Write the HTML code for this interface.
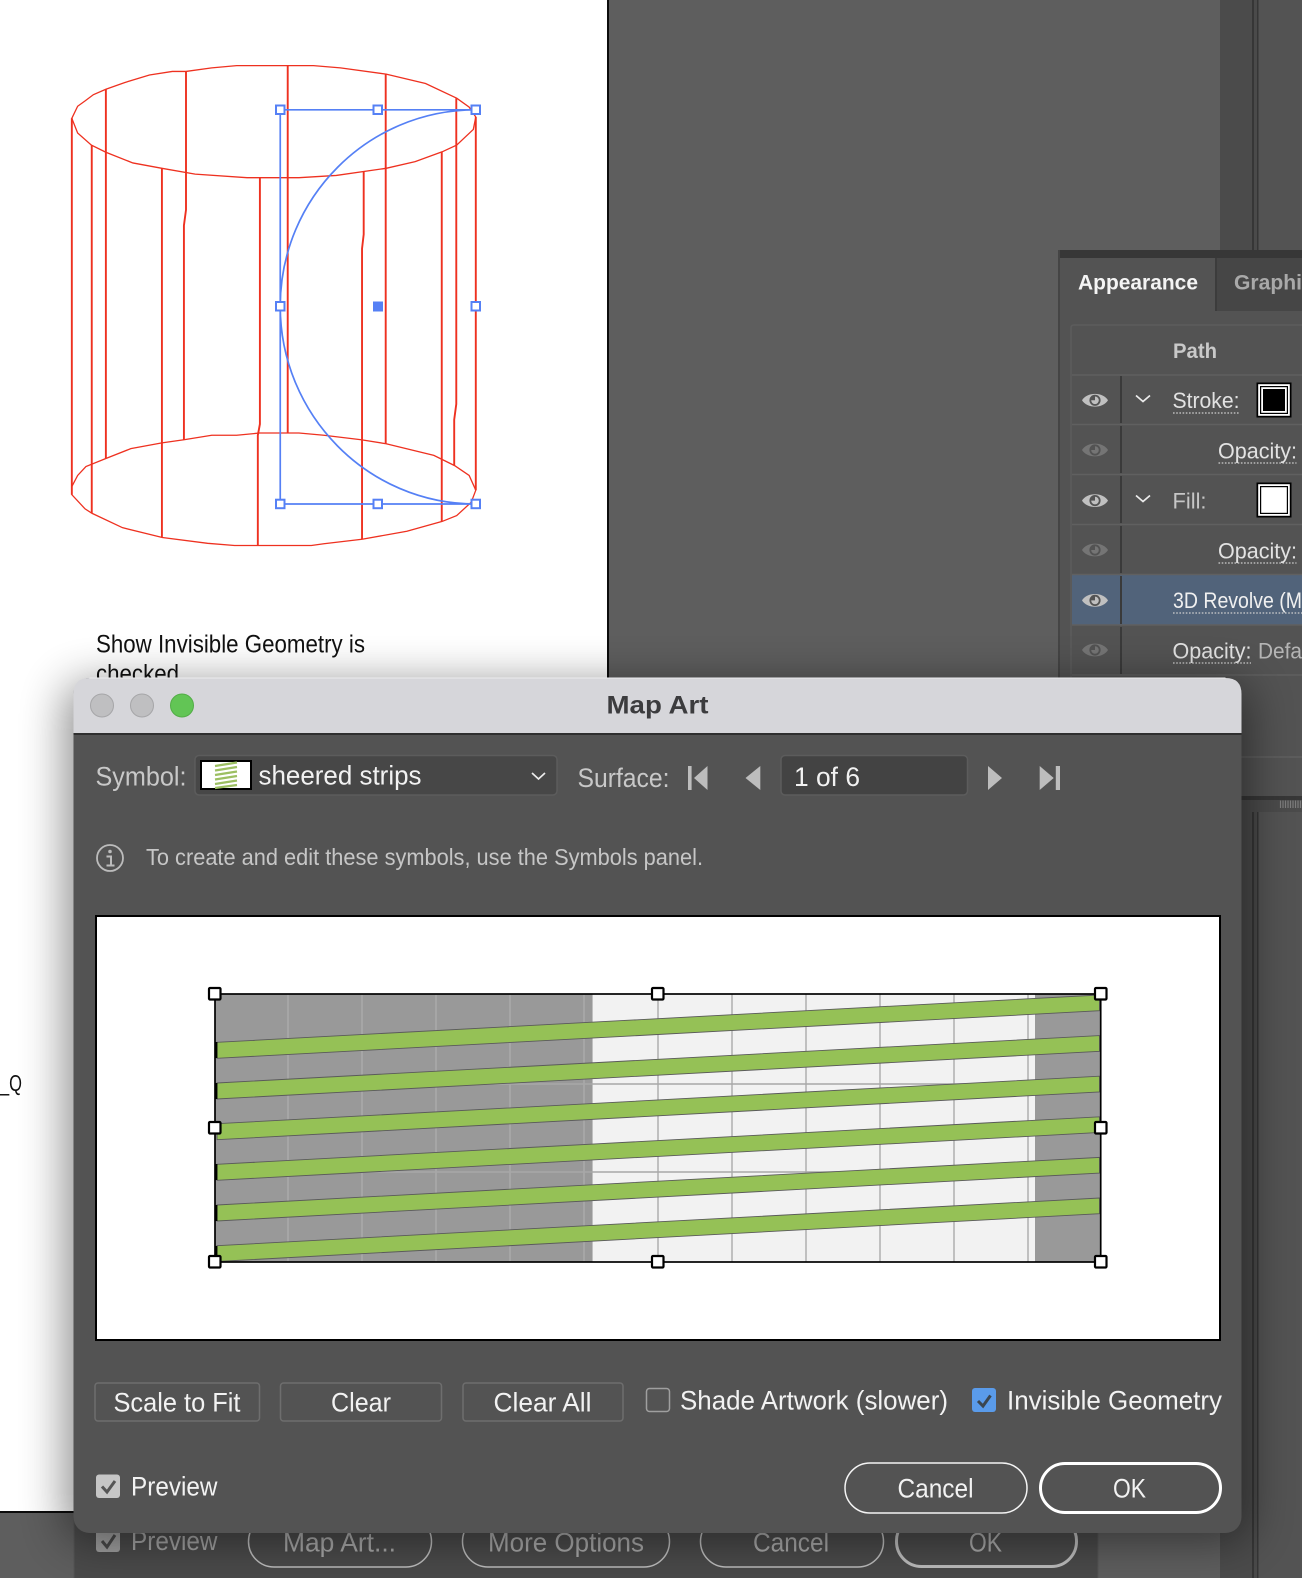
<!DOCTYPE html>
<html><head><meta charset="utf-8"><title>Map Art</title>
<style>
html,body{margin:0;padding:0;background:#5e5e5e;width:1302px;height:1578px;overflow:hidden}
svg{display:block}
text{font-family:"Liberation Sans",sans-serif}
.r{fill:none;stroke:#ee3120;stroke-width:1.9;vector-effect:non-scaling-stroke}
.e{fill:none;stroke:#ee3120;stroke-width:1.3;vector-effect:non-scaling-stroke}
.h{fill:#fff;stroke:#5580f5;stroke-width:2}
.k{fill:#fff;stroke:#000;stroke-width:2.2}
.d{stroke:#cfcfcf;stroke-width:1.3;stroke-dasharray:1.6 1.6}
.rl{stroke:#606060;stroke-width:1.5}
.sp{fill:#95c156;stroke:#5a5a5a;stroke-width:.9}
.gd{stroke:#a9a9a9;stroke-width:1.6}
.gl{stroke:#aaaaaa;stroke-width:1.4}
</style></head><body>
<svg width="1302" height="1578" viewBox="0 0 1302 1578" xmlns="http://www.w3.org/2000/svg">
<defs>
<filter id="sh" x="-10%" y="-15%" width="120%" height="130%"><feGaussianBlur stdDeviation="23"/></filter>
<g id="eye"><path d="M-13,0C-8,-8.5 8,-8.5 13,0C8,8.5 -8,8.5 -13,0Z"/><circle r="5.6" fill="#535353"/><path d="M-3.8,0A3.8,3.8 0 1 0 0,-3.8L0,0Z"/></g>
</defs>

<rect width="1302" height="1578" fill="#5e5e5e"/>
<!-- artboard -->
<rect x="0" y="0" width="608" height="1511" fill="#fff"/>
<rect x="607" y="0" width="2" height="1513" fill="#0c0c0c"/>
<rect x="0" y="1511" width="609" height="2" fill="#0c0c0c"/>

<svg x="0" y="0" width="651" height="700" viewBox="0 0 1568 1568" preserveAspectRatio="none">
<path class="e" d="M173,265L187,238L205,226L225,212L255,200L300,185L360,168L415,160L448,160L510,152L570,147L755,147L820,152L930,166L1025,187L1100,220L1130,240L1146,262L1140,290L1100,325L1065,340L1000,362L930,377L810,393L720,398L595,398L470,390L390,377L320,365L255,341L220,325L187,298Z"/>
<path class="e" d="M173,1090L187,1065L207,1045L255,1027L315,1005L390,992L443,985L510,975L570,975L625,970L720,970L780,975L870,985L930,994L1045,1020L1095,1043L1130,1065L1146,1098L1135,1125L1100,1155L1065,1168L980,1190L872,1208L780,1218L750,1222L565,1222L500,1217L391,1204L295,1182L222,1150L205,1140L173,1108Z"/>
<path class="r" d="M173,265V1108M221,325V1150M255,200V1027M390,377V1204M448,160V470L443,505V985M626,398V950L621,975V1222M693,147V970M876,385V525L872,557V1208M929,165V994M1064,340V1168M1099,220V905L1094,940V1043M1146,262V1098"/>
<path d="M1146,246H675V1129H1146M1146,246C886,246 675,443 675,686C675,930 886,1129 1146,1129" fill="none" stroke="#5580f5" stroke-width="1.7" vector-effect="non-scaling-stroke"/>
</svg>
<rect class="h" x="276" y="105.5" width="8.5" height="8.5"/>
<rect class="h" x="373.5" y="105.5" width="8.5" height="8.5"/>
<rect class="h" x="471.5" y="105.5" width="8.5" height="8.5"/>
<rect class="h" x="276" y="302" width="8.5" height="8.5"/>
<rect x="373" y="301.5" width="10" height="10" fill="#5580f5"/>
<rect class="h" x="471.5" y="302" width="8.5" height="8.5"/>
<rect class="h" x="276" y="499.7" width="8.5" height="8.5"/>
<rect class="h" x="373.5" y="499.7" width="8.5" height="8.5"/>
<rect class="h" x="471.5" y="499.7" width="8.5" height="8.5"/>

<text x="96" y="652.5" font-size="25" fill="#111" textLength="269" lengthAdjust="spacingAndGlyphs">Show Invisible Geometry is</text>
<text x="96" y="682" font-size="25" fill="#111" textLength="83" lengthAdjust="spacingAndGlyphs">checked</text>
<text x="0" y="1091" font-size="23" fill="#111" textLength="22" lengthAdjust="spacingAndGlyphs">_Q</text>

<!-- right side vertical bands -->
<rect x="1220" y="0" width="32" height="1578" fill="#4b4b4b"/>
<rect x="1252" y="0" width="2" height="1578" fill="#363636"/>
<rect x="1254" y="0" width="3" height="1578" fill="#4a4a4a"/>
<rect x="1257" y="0" width="1.5" height="1578" fill="#363636"/>
<rect x="1258.5" y="0" width="44" height="1578" fill="#535353"/>

<!-- Appearance panel -->
<rect x="1058" y="250" width="244" height="562" fill="#535353"/>
<rect x="1058" y="250" width="244" height="8" fill="#373737"/>
<rect x="1058" y="250" width="2" height="562" fill="#454545"/>
<rect x="1216" y="258" width="86" height="53" fill="#464646"/>
<rect x="1215" y="258" width="2" height="53" fill="#3c3c3c"/>
<text x="1078" y="289.5" font-size="21.5" font-weight="700" fill="#f4f4f4" textLength="120" lengthAdjust="spacingAndGlyphs">Appearance</text>
<text x="1234" y="289.5" font-size="21.5" font-weight="700" fill="#a9a9a9" textLength="68" lengthAdjust="spacingAndGlyphs">Graphi</text>

<path d="M1071,757V328Q1071,325 1074,325H1302" fill="none" stroke="#5c5c5c" stroke-width="1.5"/>
<rect x="1072" y="575" width="230" height="50" fill="#51637a"/>
<line class="rl" x1="1072" y1="375" x2="1302" y2="375"/>
<line class="rl" x1="1072" y1="424.5" x2="1302" y2="424.5"/>
<line class="rl" x1="1072" y1="474.5" x2="1302" y2="474.5"/>
<line class="rl" x1="1072" y1="524.5" x2="1302" y2="524.5"/>
<line class="rl" x1="1072" y1="574.5" x2="1302" y2="574.5"/>
<line class="rl" x1="1072" y1="625" x2="1302" y2="625"/>
<line class="rl" x1="1072" y1="675" x2="1302" y2="675"/>
<line class="rl" x1="1072" y1="757" x2="1302" y2="757"/>
<g fill="#3a3a3a">
<rect x="1120" y="376" width="2" height="47"/><rect x="1120" y="426" width="2" height="47"/>
<rect x="1120" y="476" width="2" height="47"/><rect x="1120" y="526" width="2" height="47"/>
<rect x="1120" y="576" width="2" height="48"/><rect x="1120" y="627" width="2" height="47"/>
</g>
<use href="#eye" x="1095" y="400.3" fill="#c0c0c0"/>
<use href="#eye" x="1095" y="450" fill="#757575"/>
<use href="#eye" x="1095" y="500.6" fill="#c0c0c0"/>
<use href="#eye" x="1095" y="550" fill="#757575"/>
<use href="#eye" x="1095" y="600.4" fill="#c0c0c0"/>
<use href="#eye" x="1095" y="650" fill="#757575"/>
<path d="M1136,395.5L1143,401.5L1150,395.5M1136,495.5L1143,501.5L1150,495.5" fill="none" stroke="#ececec" stroke-width="1.7"/>

<text x="1173" y="358" font-size="21.5" font-weight="700" fill="#c9c9c9" textLength="44" lengthAdjust="spacingAndGlyphs">Path</text>
<text x="1172.5" y="408" font-size="22" fill="#e2e2e2" textLength="67" lengthAdjust="spacingAndGlyphs">Stroke:</text>
<line class="d" x1="1173" y1="413" x2="1239" y2="413"/>
<rect x="1256.5" y="382.5" width="35" height="35" fill="#000"/><rect x="1258.2" y="384.2" width="31.6" height="31.6" fill="#fff"/><rect x="1260" y="386" width="28" height="28" fill="#000"/><rect x="1261.2" y="387.2" width="25.6" height="25.6" fill="#fff"/><rect x="1263" y="389" width="22" height="22" fill="#000"/>
<text x="1218" y="458.5" font-size="22" fill="#e2e2e2" textLength="79" lengthAdjust="spacingAndGlyphs">Opacity:</text>
<line class="d" x1="1218.5" y1="463" x2="1296.5" y2="463"/>
<text x="1172.5" y="508.5" font-size="22" fill="#c6c6c6" textLength="34" lengthAdjust="spacingAndGlyphs">Fill:</text>
<rect x="1256.5" y="482.5" width="35" height="35" fill="#000"/><rect x="1258.2" y="484.2" width="31.6" height="31.6" fill="#fff"/><rect x="1260" y="486" width="28" height="28" fill="#000"/><rect x="1261.2" y="487.2" width="25.6" height="25.6" fill="#fff"/>
<text x="1218" y="558.5" font-size="22" fill="#e2e2e2" textLength="79" lengthAdjust="spacingAndGlyphs">Opacity:</text>
<line class="d" x1="1218.5" y1="563" x2="1296.5" y2="563"/>
<text x="1173" y="608" font-size="22" fill="#f0f0f0" textLength="129" lengthAdjust="spacingAndGlyphs">3D Revolve (M</text>
<line class="d" x1="1173" y1="613" x2="1302" y2="613"/>
<text x="1172.5" y="658.5" font-size="22" fill="#e2e2e2" textLength="79" lengthAdjust="spacingAndGlyphs">Opacity:</text>
<line class="d" x1="1173" y1="663" x2="1251" y2="663"/>
<text x="1258" y="658.5" font-size="22" fill="#b5b5b5" textLength="44" lengthAdjust="spacingAndGlyphs">Defa</text>

<rect x="1058" y="796" width="244" height="4" fill="#373737"/>
<rect x="1058" y="800" width="244" height="12" fill="#4b4b4b"/>
<path d="M1280.5,800.5V808M1283,800.5V808M1285.5,800.5V808M1288,800.5V808M1290.5,800.5V808M1293,800.5V808M1295.5,800.5V808M1298,800.5V808M1300.5,800.5V808" stroke="#7d7d7d" stroke-width="1.2"/>

<!-- dialog underneath -->
<rect x="74" y="1500" width="1024" height="100" rx="14" fill="#4a4a4a" stroke="#555" stroke-width="1"/>
<rect x="96" y="1528" width="24" height="24" rx="3" fill="#9e9e9e"/>
<path d="M102,1541L107,1547L115,1535" fill="none" stroke="#4a4a4a" stroke-width="3"/>
<text x="131" y="1550" font-size="27" fill="#a2a2a2" textLength="86.5" lengthAdjust="spacingAndGlyphs">Preview</text>
<rect x="248.5" y="1516" width="183" height="51" rx="25.5" fill="none" stroke="#bcbcbc" stroke-width="1.5"/>
<text x="283" y="1551.5" font-size="27" fill="#a8a8a8" textLength="113" lengthAdjust="spacingAndGlyphs">Map Art...</text>
<rect x="462.5" y="1516" width="207" height="51" rx="25.5" fill="none" stroke="#bcbcbc" stroke-width="1.5"/>
<text x="488" y="1551.5" font-size="27" fill="#a8a8a8" textLength="156" lengthAdjust="spacingAndGlyphs">More Options</text>
<rect x="700.5" y="1516" width="183" height="51" rx="25.5" fill="none" stroke="#bcbcbc" stroke-width="1.5"/>
<text x="753" y="1551.5" font-size="27" fill="#a8a8a8" textLength="76" lengthAdjust="spacingAndGlyphs">Cancel</text>
<rect x="896.5" y="1516" width="180" height="50.5" rx="25" fill="none" stroke="#bcbcbc" stroke-width="3"/>
<text x="969" y="1551.5" font-size="27" fill="#a8a8a8" textLength="33" lengthAdjust="spacingAndGlyphs">OK</text>

<!-- main dialog -->
<rect x="66" y="684" width="1182" height="856" rx="18" fill="#000" opacity=".46" filter="url(#sh)"/>
<rect x="73.5" y="678" width="1168" height="855" rx="16" fill="#535353"/>
<path d="M73.5,734V694Q73.5,678 89.5,678H1225.5Q1241.5,678 1241.5,694V734Z" fill="#d6d6da"/>
<path d="M89.5,678H1225.5" stroke="#ececee" stroke-width="1"/>
<rect x="73.5" y="733" width="1168" height="2" fill="#2f2f2f"/>
<circle cx="102" cy="705.5" r="11.5" fill="#bfbfc1" stroke="#a6a6a8"/>
<circle cx="142" cy="705.5" r="11.5" fill="#bfbfc1" stroke="#a6a6a8"/>
<circle cx="182" cy="705.5" r="11.5" fill="#62c555" stroke="#52ad46"/>
<text x="606.5" y="713.5" font-size="25" font-weight="700" fill="#3c3c3e" textLength="102" lengthAdjust="spacingAndGlyphs">Map Art</text>

<text x="95.5" y="785.5" font-size="27" fill="#c8c8c8" textLength="91" lengthAdjust="spacingAndGlyphs">Symbol:</text>
<rect x="195" y="755.5" width="362" height="39.5" rx="4" fill="#474747" stroke="#5c5c5c" stroke-width="1.5"/>
<rect x="201" y="761" width="50" height="28" fill="#fff" stroke="#000" stroke-width="2"/>
<path d="M215,766L237,762.5M215,770.5L237,767M215,775L237,771.5M215,779.5L237,776M215,784L237,780.5M215,788L237,785" stroke="#9cbf62" stroke-width="2.3" fill="none"/>
<text x="258.5" y="784.5" font-size="27" fill="#f2f2f2" textLength="163" lengthAdjust="spacingAndGlyphs">sheered strips</text>
<path d="M532,773L538.5,779L545,773" fill="none" stroke="#ececec" stroke-width="1.7"/>

<text x="577.5" y="787" font-size="27" fill="#c8c8c8" textLength="92" lengthAdjust="spacingAndGlyphs">Surface:</text>
<g fill="#bdbdbd">
<rect x="688" y="766" width="3.6" height="24"/><path d="M707.5,766V790L694,778Z"/>
<path d="M760.3,766V790L745.5,778Z"/>
<path d="M988,766V790L1002,778Z"/>
<path d="M1039.7,766V790L1053.7,778Z"/><rect x="1055.8" y="766" width="4.2" height="24"/>
</g>
<rect x="781" y="755.5" width="186.5" height="39.5" rx="4" fill="#434343" stroke="#5c5c5c" stroke-width="1.5"/>
<text x="794" y="786" font-size="27" fill="#f2f2f2" textLength="66" lengthAdjust="spacingAndGlyphs">1 of 6</text>

<circle cx="110" cy="858" r="13" fill="none" stroke="#bcbcbc" stroke-width="1.8"/>
<circle cx="110" cy="851.5" r="1.8" fill="#bcbcbc"/>
<path d="M106.5,856.5H111V865M106.5,865.5H114.5" fill="none" stroke="#bcbcbc" stroke-width="2"/>
<text x="146" y="865" font-size="23" fill="#c6c6c6" textLength="557" lengthAdjust="spacingAndGlyphs">To create and edit these symbols, use the Symbols panel.</text>

<!-- preview -->
<rect x="96" y="916" width="1124" height="424" fill="#fff" stroke="#000" stroke-width="2"/>
<rect x="215" y="994" width="377.7" height="268" fill="#999"/>
<rect x="592.7" y="994" width="442.3" height="268" fill="#f2f2f2"/>
<rect x="1035" y="994" width="65.7" height="268" fill="#999"/>
<path class="gd" d="M288,994V1262M362,994V1262M436,994V1262M510,994V1262M584,994V1262"/>
<path class="gl" d="M658,994V1262M732,994V1262M806,994V1262M880,994V1262M954,994V1262M1028,994V1262"/>
<path class="gl" d="M215,1084H1100M215,1172H1100" style="stroke:#a8a8a8"/>
<polygon class="sp" points="217,1042.3 1099.5,995 1099.5,1010.7 217,1058.3"/>
<polygon class="sp" points="217,1083 1099.5,1035.6 1099.5,1051.3 217,1099"/>
<polygon class="sp" points="217,1123.7 1099.5,1076.2 1099.5,1091.9 217,1139.7"/>
<polygon class="sp" points="217,1164.3 1099.5,1116.8 1099.5,1132.5 217,1180.3"/>
<polygon class="sp" points="217,1205 1099.5,1157.4 1099.5,1173.1 217,1221"/>
<polygon class="sp" points="217,1245.7 1099.5,1198 1099.5,1213.7 217,1261.5"/>
<rect x="215" y="994" width="885.7" height="268" fill="none" stroke="#000" stroke-width="1.7"/>
<g fill="#000">
<rect x="215" y="1042" width="2.4" height="16"/><rect x="215" y="1083" width="2.4" height="16"/>
<rect x="215" y="1164" width="2.4" height="16"/><rect x="215" y="1205" width="2.4" height="16"/>
<rect x="215" y="1246" width="2.4" height="16"/>
</g>
<rect class="k" x="209" y="988" width="11.5" height="11.5" rx="1"/>
<rect class="k" x="652" y="988" width="11.5" height="11.5" rx="1"/>
<rect class="k" x="1095" y="988" width="11.5" height="11.5" rx="1"/>
<rect class="k" x="209" y="1122" width="11.5" height="11.5" rx="1"/>
<rect class="k" x="1095" y="1122" width="11.5" height="11.5" rx="1"/>
<rect class="k" x="209" y="1256" width="11.5" height="11.5" rx="1"/>
<rect class="k" x="652" y="1256" width="11.5" height="11.5" rx="1"/>
<rect class="k" x="1095" y="1256" width="11.5" height="11.5" rx="1"/>

<!-- buttons -->
<g fill="none" stroke="#6e6e6e" stroke-width="1.5">
<rect x="95" y="1383" width="164.5" height="38" rx="3"/>
<rect x="280.5" y="1383" width="161" height="38" rx="3"/>
<rect x="463" y="1383" width="160" height="38" rx="3"/>
</g>
<text x="113.5" y="1411.5" font-size="27" fill="#f2f2f2" textLength="127" lengthAdjust="spacingAndGlyphs">Scale to Fit</text>
<text x="331" y="1411.5" font-size="27" fill="#f2f2f2" textLength="60" lengthAdjust="spacingAndGlyphs">Clear</text>
<text x="493.5" y="1411.5" font-size="27" fill="#f2f2f2" textLength="98" lengthAdjust="spacingAndGlyphs">Clear All</text>

<rect x="646.5" y="1388.5" width="23" height="23" rx="3" fill="none" stroke="#9f9f9f" stroke-width="1.5"/>
<text x="680" y="1409.5" font-size="27" fill="#f2f2f2" textLength="268" lengthAdjust="spacingAndGlyphs">Shade Artwork (slower)</text>
<rect x="972" y="1388" width="24" height="24" rx="3" fill="#5a9bea"/>
<path d="M978,1401L983,1406L990.5,1395.5" fill="none" stroke="#3b4650" stroke-width="3"/>
<text x="1007" y="1409.5" font-size="27" fill="#f2f2f2" textLength="215" lengthAdjust="spacingAndGlyphs">Invisible Geometry</text>

<rect x="96" y="1474.5" width="24" height="23.5" rx="3" fill="#c6c6c6"/>
<path d="M102,1486.5L107,1492L115,1481" fill="none" stroke="#555" stroke-width="3"/>
<text x="131" y="1495.5" font-size="27" fill="#f2f2f2" textLength="86.5" lengthAdjust="spacingAndGlyphs">Preview</text>

<rect x="845" y="1463" width="182" height="50" rx="25" fill="none" stroke="#f4f4f4" stroke-width="1.5"/>
<text x="897.5" y="1497.5" font-size="27" fill="#f2f2f2" textLength="76" lengthAdjust="spacingAndGlyphs">Cancel</text>
<rect x="1040.5" y="1463.5" width="180" height="49" rx="24.5" fill="none" stroke="#fff" stroke-width="3"/>
<text x="1113" y="1497.5" font-size="27" fill="#f2f2f2" textLength="33" lengthAdjust="spacingAndGlyphs">OK</text>
</svg>
</body></html>
